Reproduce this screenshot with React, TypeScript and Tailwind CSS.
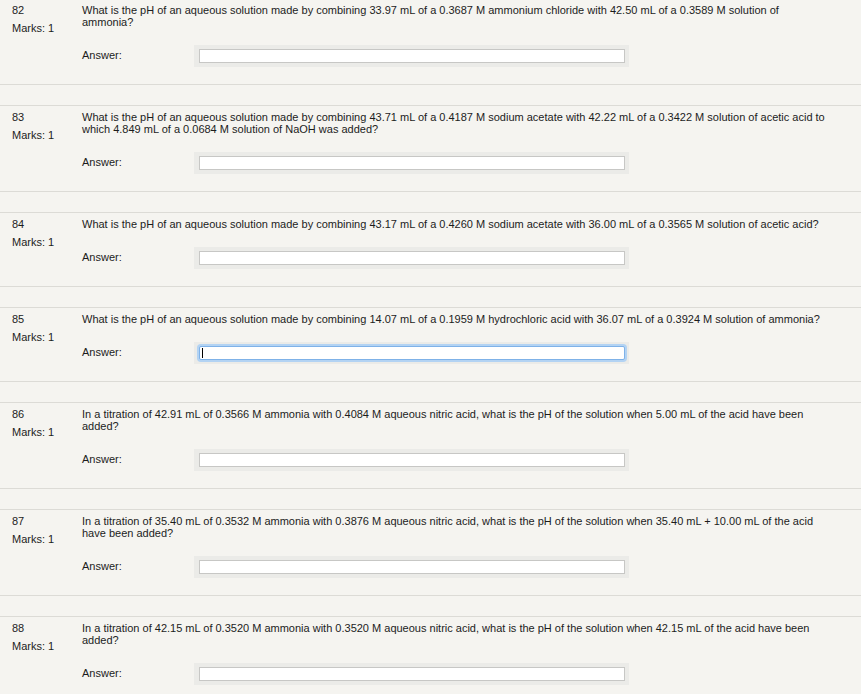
import React from "react";

interface Question {
  num: number;
  text: string;
  focused?: boolean;
}

const questions: Question[] = [
  {
    num: 82,
    text: "What is the pH of an aqueous solution made by combining 33.97 mL of a 0.3687 M ammonium chloride with 42.50 mL of a 0.3589 M solution of ammonia?",
  },
  {
    num: 83,
    text: "What is the pH of an aqueous solution made by combining 43.71 mL of a 0.4187 M sodium acetate with 42.22 mL of a 0.3422 M solution of acetic acid to which 4.849 mL of a 0.0684 M solution of NaOH was added?",
  },
  {
    num: 84,
    text: "What is the pH of an aqueous solution made by combining 43.17 mL of a 0.4260 M sodium acetate with 36.00 mL of a 0.3565 M solution of acetic acid?",
  },
  {
    num: 85,
    text: "What is the pH of an aqueous solution made by combining 14.07 mL of a 0.1959 M hydrochloric acid with 36.07 mL of a 0.3924 M solution of ammonia?",
    focused: true,
  },
  {
    num: 86,
    text: "In a titration of 42.91 mL of 0.3566 M ammonia with 0.4084 M aqueous nitric acid, what is the pH of the solution when 5.00 mL of the acid have been added?",
  },
  {
    num: 87,
    text: "In a titration of 35.40 mL of 0.3532 M ammonia with 0.3876 M aqueous nitric acid, what is the pH of the solution when 35.40 mL + 10.00 mL of the acid have been added?",
  },
  {
    num: 88,
    text: "In a titration of 42.15 mL of 0.3520 M ammonia with 0.3520 M aqueous nitric acid, what is the pH of the solution when 42.15 mL of the acid have been added?",
  },
];

const QuestionBlock = ({ q }: { q: Question }) => {
  return (
    <div className="mb-[20px] flex border-y border-[#dcdbd6] pb-[17px] pt-[5px]">
      <div className="w-[82px] shrink-0 pl-[12px]">
        <div>{q.num}</div>
        <div className="mt-[6px]">Marks: 1</div>
      </div>
      <div className="w-[746px]">
        <p>{q.text}</p>
        <div className="mt-[17px] flex items-center">
          <span className="w-[112px] pb-[2px]">Answer:</span>
          <div className="flex h-[22px] w-[435px] items-center bg-[#ebebe8] pl-[5px] pr-[4px]">
            {q.focused ? (
              <div className="relative h-[14px] w-full rounded-[2px] border border-[#7fb2e8] bg-white shadow-[0_0_0_2px_#b3d3f3]">
                <span className="absolute left-[2px] top-[1px] h-[10px] w-px bg-black" />
              </div>
            ) : (
              <div className="h-[14px] w-full border border-[#c7c7c5] bg-white" />
            )}
          </div>
        </div>
      </div>
    </div>
  );
};

export default function App() {
  return (
    <div className="h-[694px] overflow-hidden bg-[#f5f4f0] text-[11px] leading-[12px] text-[#1c1c1c] [font-family:'Liberation_Sans',Arial,sans-serif]">
      <div className="-mt-[2px]">
        {questions.map((q) => (
          <QuestionBlock key={q.num} q={q} />
        ))}
      </div>
    </div>
  );
}
